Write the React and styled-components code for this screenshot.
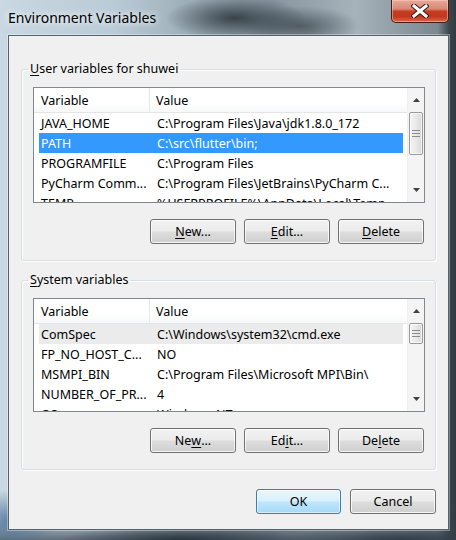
import React from 'react';
import styled, { createGlobalStyle, css } from 'styled-components';

const FONT = `"Segoe UI", "Noto Sans", "Open Sans", sans-serif`;

const Global = createGlobalStyle`
  html, body { margin: 0; padding: 0; width: 456px; height: 540px; overflow: hidden; }
  body { font-family: ${FONT}; font-size: 12px; color: #000; }
  * { box-sizing: border-box; }
`;

const Window = styled.div`
  width: 456px;
  height: 540px;
  display: flex;
  flex-direction: column;
  padding: 0 7px 10px 8px;
  background:
    radial-gradient(ellipse 70px 22px at 235px 18px, rgba(40, 50, 58, 0.85), rgba(40, 50, 58, 0) 100%),
    radial-gradient(ellipse 60px 20px at 300px 26px, rgba(60, 70, 78, 0.75), rgba(60, 70, 78, 0) 100%),
    radial-gradient(ellipse 50px 30px at 10px 520px, rgba(70, 110, 150, 0.8), rgba(70, 110, 150, 0) 100%),
    radial-gradient(ellipse 120px 14px at 180px 540px, rgba(40, 50, 60, 0.95), rgba(40, 50, 60, 0) 100%),
    radial-gradient(ellipse 120px 14px at 400px 540px, rgba(50, 60, 70, 0.95), rgba(50, 60, 70, 0) 100%),
    linear-gradient(to bottom, rgba(0, 0, 0, 0) 96%, rgba(55, 68, 78, 0.7) 100%),
    linear-gradient(to right, #c9d8e2 0%, #b9cbd7 25%, #98a8b2 45%, #8795a0 60%, #a6b3bb 78%, #7c8890 96%, #3b454c 98.5%, #323b41 100%);
`;

const TitleBar = styled.div`
  height: 35px;
  display: flex;
  align-items: flex-start;
  flex-shrink: 0;
`;

const Title = styled.div`
  margin-top: 8px;
  font-size: 14px;
  line-height: 20px;
  color: #000;
  text-shadow: 0 0 6px rgba(255, 255, 255, 0.95), 0 0 10px rgba(255, 255, 255, 0.7);
`;

const CloseButton = styled.div`
  margin-left: auto;
  width: 58px;
  height: 23px;
  border: 1px solid #4a1a12;
  border-top: none;
  border-radius: 0 0 5px 5px;
  background: linear-gradient(to bottom, #e9a898 0%, #d88a76 40%, #c43c22 52%, #c2381f 75%, #d56a4a 100%);
  box-shadow: inset 0 0 0 1px rgba(255, 220, 210, 0.45);
  display: flex;
  align-items: center;
  justify-content: center;
`;

const Client = styled.div`
  flex: 1;
  background: #f0f0f0;
  border: 1px solid #56636c;
  box-shadow: 0 0 0 1px rgba(255, 255, 255, 0.35);
  display: flex;
  flex-direction: column;
  padding: 25px 12px 0 12px;
`;

const Group = styled.fieldset`
  margin: 0 0 ${p => p.$gap || 0}px 0;
  padding: 0;
  border: 1px solid #d5dfe5;
  border-radius: 3px;
  box-shadow: inset 1px 1px 0 #fff, 1px 1px 0 #fff;
  min-width: 0;
`;

const Legend = styled.legend`
  margin-left: 6px;
  padding: 0 2px;
  font-size: 12.5px;
  line-height: 16px;
`;

const GroupBody = styled.div`
  padding: 10px 10px 16px 11px;
  display: flex;
  flex-direction: column;
  gap: 16px;
`;

const U = styled.span`
  text-decoration: underline;
  text-underline-offset: 2px;
`;

const List = styled.div`
  height: ${p => p.$h || 116}px;
  border: 1px solid #828790;
  background: #fff;
  display: flex;
  overflow: hidden;
`;

const ListMain = styled.div`
  flex: 1;
  min-width: 0;
  overflow: hidden;
  display: flex;
  flex-direction: column;
`;

const Header = styled.div`
  height: 25px;
  flex-shrink: 0;
  display: flex;
  align-items: center;
  background: linear-gradient(to bottom, #ffffff 0%, #ffffff 60%, #f7f8f9 100%);
  border-bottom: 1px solid #e5e5e5;
  font-size: 12.5px;
`;

const HeaderCell = styled.div`
  height: 100%;
  display: flex;
  align-items: center;
  padding-left: ${p => p.$pad}px;
  width: ${p => (p.$w ? `${p.$w}px` : 'auto')};
  flex: ${p => (p.$w ? 'none' : 1)};
  border-right: ${p => (p.$sep ? '1px solid #e3e8ee' : 'none')};
`;

const Row = styled.div`
  height: 20px;
  flex-shrink: 0;
  margin: 0 4px 0 5px;
  display: flex;
  align-items: center;
  white-space: nowrap;
  font-size: 12.5px;
  ${p => p.$selected && css`
    background: #3399ff;
    color: #fff;
  `}
  ${p => p.$inactive && css`
    background: #ebebeb;
  `}
`;

const Cell = styled.div`
  padding-left: 2px;
  width: ${p => (p.$w ? `${p.$w}px` : 'auto')};
  flex: ${p => (p.$w ? 'none' : 1)};
  overflow: hidden;
`;

const Scrollbar = styled.div`
  width: 17px;
  flex-shrink: 0;
  background: #f4f4f4;
  border-left: 1px solid #f0f0f0;
  display: flex;
  flex-direction: column;
  align-items: center;
`;

const ArrowBtn = styled.div`
  height: ${p => p.$h}px;
  width: 100%;
  display: flex;
  align-items: center;
  justify-content: center;
  flex-shrink: 0;
`;

const Track = styled.div`
  flex: 1;
  width: 100%;
  display: flex;
  flex-direction: column;
  padding-top: ${p => p.$top}px;
`;

const Thumb = styled.div`
  height: ${p => p.$h}px;
  margin: 0 1px;
  border: 1px solid #9a9a9a;
  border-radius: 2px;
  background: linear-gradient(to right, #f3f3f3 0%, #e9e9e9 50%, #d8d8d8 100%);
  box-shadow: inset 0 0 0 1px rgba(255, 255, 255, 0.7);
  display: flex;
  align-items: center;
  justify-content: center;
`;

const ButtonRow = styled.div`
  display: flex;
  justify-content: flex-end;
  gap: ${p => p.$gap || 8}px;
  padding-right: ${p => p.$right || 0}px;
`;

const Button = styled.div`
  width: ${p => p.$w || 86}px;
  height: 25px;
  border: 1px solid ${p => (p.$default ? '#3c7fb1' : '#707070')};
  border-radius: 3px;
  display: flex;
  align-items: center;
  justify-content: center;
  font-size: 12.5px;
  background: ${p =>
    p.$default
      ? 'linear-gradient(to bottom, #eaf6fd 0%, #d9f0fc 48%, #bee6fd 52%, #a7d9f5 100%)'
      : 'linear-gradient(to bottom, #f2f2f2 0%, #ebebeb 48%, #dddddd 52%, #cfcfcf 100%)'};
  box-shadow: inset 0 0 0 1px ${p => (p.$default ? 'rgba(255,255,255,0.55)' : 'rgba(255,255,255,0.8)')};
`;

const Footer = styled.div`
  margin-top: 19px;
`;

const UpArrow = () => (
  <svg width="7" height="4" viewBox="0 0 7 4"><path d="M0 4 L3.5 0 L7 4 Z" fill="#404040" /></svg>
);
const DownArrow = () => (
  <svg width="7" height="4" viewBox="0 0 7 4"><path d="M0 0 L3.5 4 L7 0 Z" fill="#404040" /></svg>
);
const Grip = () => (
  <svg width="8" height="7" viewBox="0 0 8 7">
    <path d="M0 0.5 H8 M0 3.5 H8 M0 6.5 H8" stroke="#8a8a8a" strokeWidth="1" />
  </svg>
);

const CloseX = () => (
  <svg width="18" height="14" viewBox="0 0 18 14">
    <path d="M3 2 L15 12 M15 2 L3 12" stroke="#3a1a14" strokeWidth="5" strokeLinecap="square" />
    <path d="M3 2 L15 12 M15 2 L3 12" stroke="#fff" strokeWidth="3" strokeLinecap="square" />
  </svg>
);

const VarList = ({ rows, upH, thumbTop, thumbH, h }) => (
  <List $h={h}>
    <ListMain>
      <Header>
        <HeaderCell $w={116} $pad={7} $sep>Variable</HeaderCell>
        <HeaderCell $pad={6}>Value</HeaderCell>
      </Header>
      {rows.map((r, i) => (
        <Row key={i} $selected={r.sel} $inactive={r.inactive}>
          <Cell $w={116}>{r.name}</Cell>
          <Cell>{r.value}</Cell>
        </Row>
      ))}
    </ListMain>
    <Scrollbar>
      <ArrowBtn $h={upH}><UpArrow /></ArrowBtn>
      <Track $top={thumbTop}>
        <Thumb $h={thumbH}><Grip /></Thumb>
      </Track>
      <ArrowBtn $h={upH}><DownArrow /></ArrowBtn>
    </Scrollbar>
  </List>
);

const userRows = [
  { name: 'JAVA_HOME', value: 'C:\\Program Files\\Java\\jdk1.8.0_172' },
  { name: 'PATH', value: 'C:\\src\\flutter\\bin;', sel: true },
  { name: 'PROGRAMFILE', value: 'C:\\Program Files' },
  { name: 'PyCharm Comm...', value: 'C:\\Program Files\\JetBrains\\PyCharm C...' },
  { name: 'TEMP', value: '%USERPROFILE%\\AppData\\Local\\Temp' },
];

const sysRows = [
  { name: 'ComSpec', value: 'C:\\Windows\\system32\\cmd.exe', inactive: true },
  { name: 'FP_NO_HOST_C...', value: 'NO' },
  { name: 'MSMPI_BIN', value: 'C:\\Program Files\\Microsoft MPI\\Bin\\' },
  { name: 'NUMBER_OF_PR...', value: '4' },
  { name: 'OS', value: 'Windows_NT' },
];

export default function App() {
  return (
    <>
      <Global />
      <Window>
        <TitleBar>
          <Title>Environment Variables</Title>
          <CloseButton><CloseX /></CloseButton>
        </TitleBar>
        <Client>
          <Group $gap={11}>
            <Legend><U>U</U>ser variables for shuwei</Legend>
            <GroupBody>
              <VarList rows={userRows} upH={24} thumbTop={0} thumbH={43} h={116} />
              <ButtonRow $right={1}>
                <Button><U>N</U>ew...</Button>
                <Button><U>E</U>dit...</Button>
                <Button><U>D</U>elete</Button>
              </ButtonRow>
            </GroupBody>
          </Group>
          <Group>
            <Legend><U>S</U>ystem variables</Legend>
            <GroupBody>
              <VarList rows={sysRows} upH={24} thumbTop={0} thumbH={21} h={114} />
              <ButtonRow $right={1}>
                <Button>Ne<U>w</U>...</Button>
                <Button>Ed<U>i</U>t...</Button>
                <Button>De<U>l</U>ete</Button>
              </ButtonRow>
            </GroupBody>
          </Group>
          <Footer>
            <ButtonRow $gap={9}>
              <Button $default $w={85}>OK</Button>
              <Button>Cancel</Button>
            </ButtonRow>
          </Footer>
        </Client>
      </Window>
    </>
  );
}
